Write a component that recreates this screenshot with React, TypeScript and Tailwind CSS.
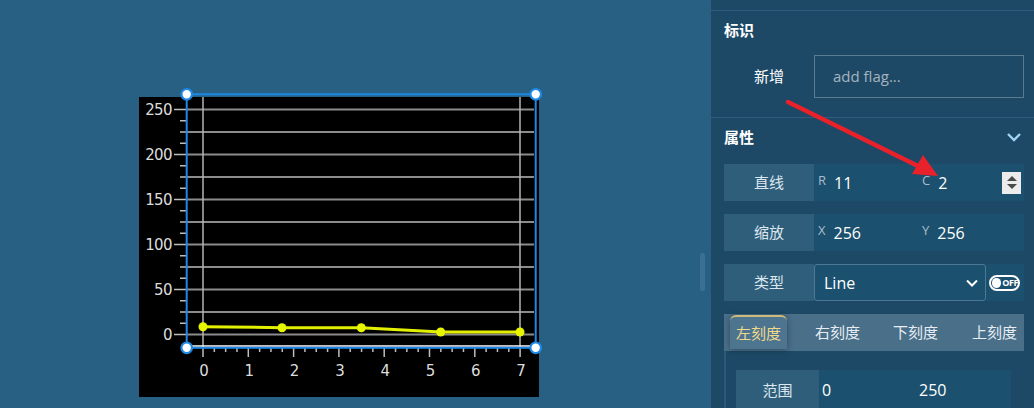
import React from 'react';

// y position in the plot for a given value (0..250)
const yOf = (v: number) => 237.5 - v * 0.9;
const xOf = (i: number) => 64 + i * 45.3;

const points: [number, number][] = [
  [64, 229.7],
  [143, 230.7],
  [222.3, 230.7],
  [301.7, 235],
  [381, 235],
];

const LineChart: React.FC = () => {
  const grid = Array.from({ length: 11 }, (_, i) => i * 25);
  const minorY = Array.from({ length: 21 }, (_, i) => i * 12.5);
  const minorX = Array.from({ length: 29 }, (_, i) => i * 0.25);
  return (
    <svg width={400} height={300} className="overflow-visible" fontFamily="'DejaVu Sans', sans-serif">
      <rect x={0} y={0} width={400} height={300} fill="#000" />
      {grid.map(v => (
        <line key={v} x1={48} x2={395} y1={yOf(v)} y2={yOf(v)} stroke="#8c8c8c" strokeWidth={2} />
      ))}
      <line x1={64} x2={64} y1={0} y2={250} stroke="#b5b5b5" strokeWidth={1.5} />
      <line x1={381} x2={381} y1={0} y2={250} stroke="#b5b5b5" strokeWidth={1.5} />
      {/* y axis ticks */}
      {minorY.map(v => (
        <line key={v} x1={v % 50 === 0 ? 35 : 41} x2={48} y1={yOf(v)} y2={yOf(v)} stroke="#bdbdbd" strokeWidth={1.5} />
      ))}
      {[0, 50, 100, 150, 200, 250].map(v => (
        <text key={v} x={33} y={yOf(v) + 5.5} textAnchor="end" fontSize={15} letterSpacing={-0.6} fill="#dcdcdc">
          {v}
        </text>
      ))}
      {/* x axis */}
      <line x1={48} x2={396} y1={249} y2={249} stroke="#fff" strokeWidth={1.5} />
      {minorX.map(t => (
        <line key={t} x1={xOf(t)} x2={xOf(t)} y1={250} y2={t % 1 === 0 ? 260 : 255} stroke="#bdbdbd" strokeWidth={1.5} />
      ))}
      {[0, 1, 2, 3, 4, 5, 6, 7].map(i => (
        <text key={i} x={xOf(i) + 1} y={279} textAnchor="middle" fontSize={15} fill="#dcdcdc">
          {i}
        </text>
      ))}
      {/* series */}
      <polyline points={points.map(p => p.join(',')).join(' ')} fill="none" stroke="#e2f000" strokeWidth={3} />
      {points.map(([x, y], i) => (
        <circle key={i} cx={x} cy={y} r={4.5} fill="#e8f500" />
      ))}
      {/* selection frame */}
      <rect x={47.7} y={-2.7} width={349} height={253.5} fill="none" stroke="#1e88e5" strokeWidth={2} />
      {[
        [47.7, -2.7],
        [396.7, -2.7],
        [47.7, 250.8],
        [396.7, 250.8],
      ].map(([x, y], i) => (
        <circle key={i} cx={x} cy={y} r={5.3} fill="#fff" stroke="#1e88e5" strokeWidth={2.2} />
      ))}
    </svg>
  );
};

const Label: React.FC<{ children: React.ReactNode; w?: string }> = ({ children, w = 'w-[90px]' }) => (
  <div className={`${w} shrink-0 h-full flex items-center justify-center bg-[#2f5e7b] text-[15px] text-[#dbe6ee]`}>
    {children}
  </div>
);

const Field: React.FC<{ k: string; v: string; className?: string }> = ({ k, v, className = '' }) => (
  <div className={`flex items-center ${className}`}>
    <span className="text-[13px] text-[#a9bccb] -mt-[3px]">{k}</span>
    <span className="ml-[8px] text-[16px] text-white">{v}</span>
  </div>
);

const Spinner: React.FC = () => (
  <div className="ml-auto mr-[3px] w-[19px] h-[22px] bg-[#ececec] flex flex-col items-center justify-center gap-[3px]">
    <svg width="10" height="5" viewBox="0 0 10 5"><path d="M5 0 L10 5 L0 5 Z" fill="#4a4a4a" /></svg>
    <svg width="10" height="5" viewBox="0 0 10 5"><path d="M0 0 L10 0 L5 5 Z" fill="#4a4a4a" /></svg>
  </div>
);

const Toggle: React.FC = () => (
  <div className="ml-[3px] w-[31px] h-[16px] rounded-full border-2 border-white flex items-center pl-[1px]">
    <div className="w-[10px] h-[10px] rounded-full bg-white" />
    <span className="ml-[1px] text-[9px] font-bold leading-none text-white tracking-tighter">OFF</span>
  </div>
);

const App: React.FC = () => {
  return (
    <div className="relative flex w-[1034px] h-[408px] overflow-hidden bg-[#286083] font-['Open_Sans','Noto_Sans_CJK_SC',sans-serif]">
      {/* canvas */}
      <div className="relative flex-1">
        <div className="absolute left-[139px] top-[97px]">
          <LineChart />
        </div>
        <div className="absolute left-[700px] top-[253px] w-[5px] h-[38px] rounded-sm bg-[#3b7094]" />
      </div>

      {/* side panel */}
      <aside className="w-[323px] shrink-0 bg-[#1d4966] pl-[13px] pr-[10px]">
        <div className="h-[11px] border-b border-[#2d5d7b] -ml-[13px] -mr-[10px]" />
        <div className="h-[38px] flex items-center text-[15px] font-bold text-white">标识</div>
        <div className="mt-[6px] h-[43px] flex items-center">
          <div className="w-[90px] text-center text-[15px] text-white">新增</div>
          <div className="flex-1 h-full border border-[#5b7b90] flex items-center pl-[18px] text-[15px] text-[#a5b4bf]">
            add flag...
          </div>
        </div>
        <div className="mt-[19px] border-t border-[#2d5d7b] -ml-[13px] -mr-[10px]" />
        <div className="h-[38px] flex items-center justify-between text-[15px] font-bold text-white">
          <span>属性</span>
          <svg width="16" height="10" viewBox="0 0 16 10" className="mr-[2px]">
            <path d="M2 2 L8 8 L14 2" fill="none" stroke="#9fd3ef" strokeWidth="2.4" />
          </svg>
        </div>

        <div className="mt-[8px] flex flex-col gap-[13px]">
          <div className="h-[37px] flex">
            <Label>直线</Label>
            <div className="flex-1 flex items-center bg-[#1b506e] pl-[4px]">
              <Field k="R" v="11" className="w-[104px]" />
              <Field k="C" v="2" />
              <Spinner />
            </div>
          </div>
          <div className="h-[37px] flex">
            <Label>缩放</Label>
            <div className="flex-1 flex items-center bg-[#1b506e] pl-[4px]">
              <Field k="X" v="256" className="w-[104px]" />
              <Field k="Y" v="256" />
            </div>
          </div>
          <div className="h-[37px] flex">
            <Label>类型</Label>
            <div className="flex-1 flex items-center bg-[#1b506e]">
              <div className="w-[172px] h-full rounded-[3px] border border-[#4d7893] flex items-center justify-between pl-[9px] pr-[7px] text-[16px] text-white">
                <span>Line</span>
                <svg width="12" height="8" viewBox="0 0 12 8">
                  <path d="M1 1.5 L6 6.5 L11 1.5" fill="none" stroke="#fff" strokeWidth="2" />
                </svg>
              </div>
              <Toggle />
            </div>
          </div>
        </div>

        <div className="mt-[13px] h-[37px] bg-[#4a6f89] flex items-center text-[15px] text-[#e6eef3]">
          <div className="ml-[6px] mt-[1px] w-[57px] h-[34px] self-start rounded-t-[6px] border-t-2 border-[#cdbb7c] bg-[#4d7590] shadow-[0_1px_6px_rgba(0,0,0,0.35)] flex items-center justify-center text-[#f1d98c]">
            左刻度
          </div>
          <span className="ml-[28px]">右刻度</span>
          <span className="ml-[33px]">下刻度</span>
          <span className="ml-[34px]">上刻度</span>
        </div>
        <div className="border-l-2 border-[#2b5a78] pl-[10px] pr-[13px] pt-[19px]">
          <div className="h-[40px] flex">
            <Label w="w-[83px]">范围</Label>
            <div className="flex-1 flex items-center bg-[#1b506e] pl-[3px] text-[16px] text-white">
              <span className="w-[97px]">0</span>
              <span>250</span>
            </div>
          </div>
        </div>
      </aside>

      {/* pointer arrow */}
      <svg className="absolute left-0 top-0 pointer-events-none" width={1034} height={408}>
        <line x1={788} y1={102} x2={920} y2={167} stroke="#e8212b" strokeWidth={4.5} strokeLinecap="round" />
        <path d="M938 176 L912 174 L923 155 Z" fill="#e8212b" />
      </svg>
    </div>
  );
};

export default App;
